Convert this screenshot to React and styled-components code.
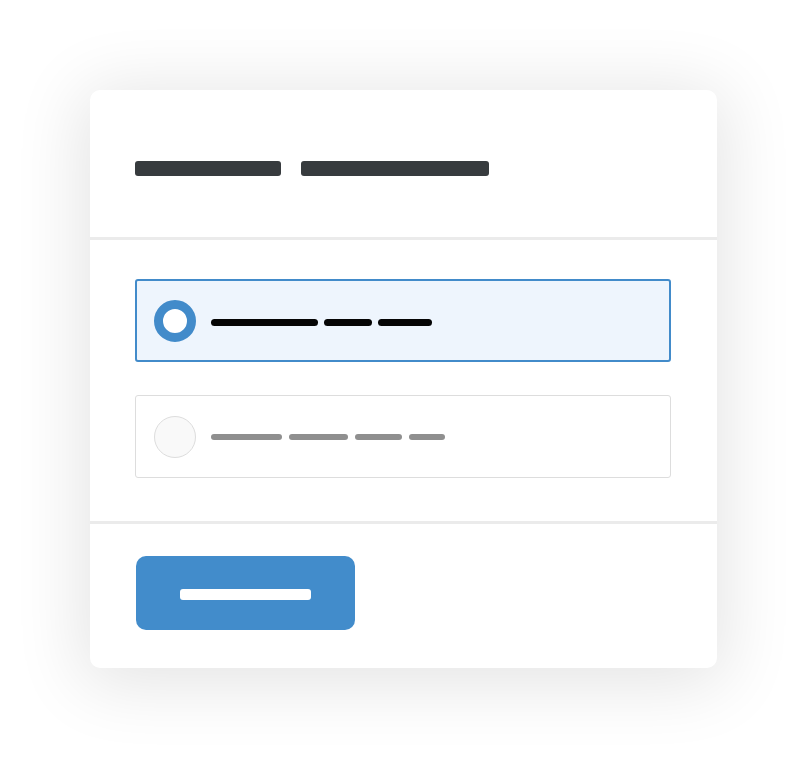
import React from "react";
import styled, { createGlobalStyle } from "styled-components";

const Global = createGlobalStyle`
  html, body { margin: 0; padding: 0; background: #ffffff; }
  body { font-family: "Liberation Sans", Arial, sans-serif; }
  * { box-sizing: border-box; }
`;

const Page = styled.div`
  width: 807px;
  height: 759px;
  padding: 90px 0 0 90px;
`;

const Card = styled.div`
  width: 627px;
  height: 578px;
  background: #ffffff;
  border-radius: 10px;
  box-shadow: 0 8px 70px 8px rgba(0, 0, 0, 0.11);
  display: flex;
  flex-direction: column;
  overflow: hidden;
`;

const Header = styled.div`
  height: 150px;
  padding: 71px 0 0 45px;
  border-bottom: 3px solid #ebebeb;
  display: flex;
  gap: 20px;
  align-items: flex-start;
`;

const TitleBar = styled.span`
  display: block;
  width: ${(p) => p.$w}px;
  height: 15px;
  border-radius: 3px;
  background: #373b3e;
`;

const Body = styled.div`
  height: 284px;
  padding: 39px 46px 0 45px;
  border-bottom: 3px solid #ebebeb;
  display: flex;
  flex-direction: column;
  gap: 33px;
`;

const Option = styled.div`
  height: 83px;
  border-radius: 3px;
  border: ${(p) => (p.$selected ? "2px solid #428bca" : "1px solid #dddddd")};
  background: ${(p) => (p.$selected ? "#eef5fd" : "#ffffff")};
  padding-left: ${(p) => (p.$selected ? 17 : 18)}px;
  display: flex;
  align-items: center;
  gap: 15px;
`;

const Radio = styled.span`
  display: block;
  flex: none;
  width: 42px;
  height: 42px;
  border-radius: 50%;
  border: ${(p) => (p.$selected ? "9px solid #428bca" : "1px solid #dddddd")};
  background: ${(p) => (p.$selected ? "#ffffff" : "#f9f9f9")};
`;

const Words = styled.span`
  display: flex;
  gap: ${(p) => (p.$selected ? 6 : 7)}px;
  align-items: center;
  margin-top: ${(p) => (p.$selected ? 3 : 1)}px;
`;

const WordBar = styled.span`
  display: block;
  width: ${(p) => p.$w}px;
  height: ${(p) => (p.$selected ? 7 : 6)}px;
  border-radius: 4px;
  background: ${(p) => (p.$selected ? "#050505" : "#8f8f8f")};
`;

const Footer = styled.div`
  flex: 1;
  padding: 32px 0 0 46px;
`;

const Button = styled.button`
  width: 219px;
  height: 74px;
  border: none;
  border-radius: 10px;
  background: #428ccb;
  display: flex;
  align-items: center;
  justify-content: center;
  padding: 2px 0 0 0;
  cursor: pointer;
`;

const ButtonBar = styled.span`
  display: block;
  width: 131px;
  height: 11px;
  border-radius: 3px;
  background: #ffffff;
`;

const options = [
  { selected: true, words: [107, 48, 54] },
  { selected: false, words: [71, 59, 47, 36] },
];

export default function App() {
  return (
    <>
      <Global />
      <Page>
        <Card>
          <Header>
            <TitleBar $w={146} />
            <TitleBar $w={188} />
          </Header>
          <Body>
            {options.map((o, i) => (
              <Option key={i} $selected={o.selected}>
                <Radio $selected={o.selected} />
                <Words $selected={o.selected}>
                  {o.words.map((w, j) => (
                    <WordBar key={j} $w={w} $selected={o.selected} />
                  ))}
                </Words>
              </Option>
            ))}
          </Body>
          <Footer>
            <Button>
              <ButtonBar />
            </Button>
          </Footer>
        </Card>
      </Page>
    </>
  );
}
